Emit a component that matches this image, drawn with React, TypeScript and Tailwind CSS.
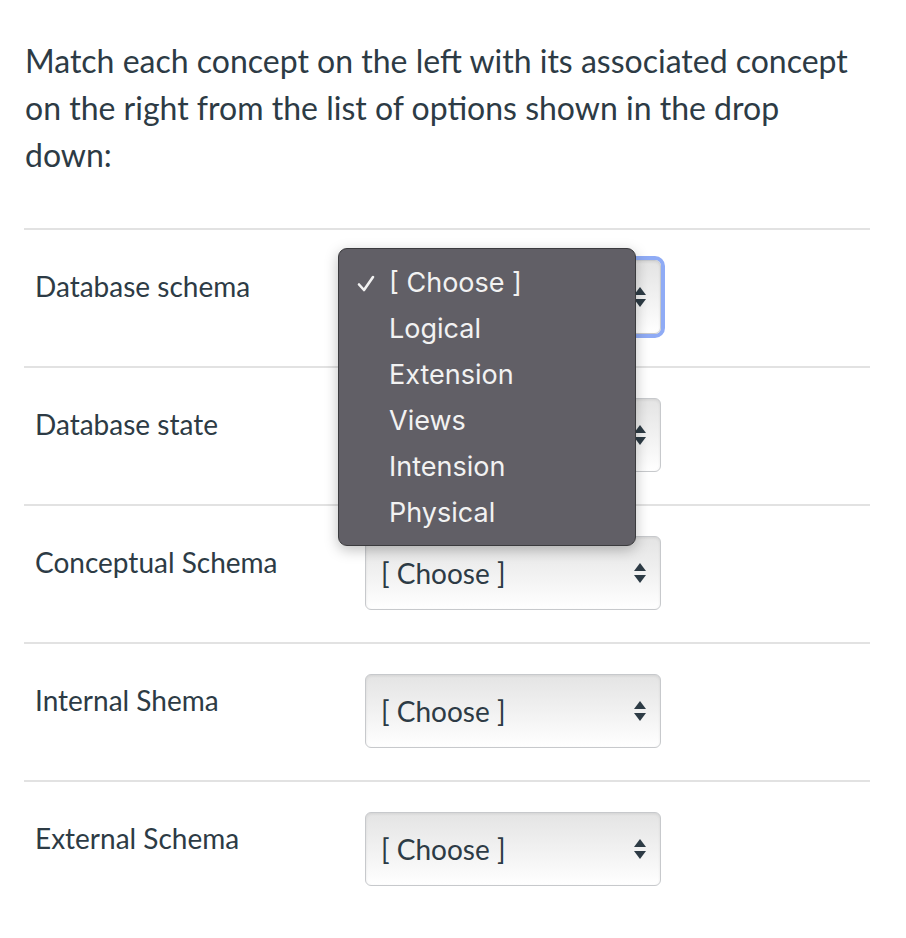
const rows = [
  "Database schema",
  "Database state",
  "Conceptual Schema",
  "Internal Shema",
  "External Schema",
];

const options = ["[ Choose ]", "Logical", "Extension", "Views", "Intension", "Physical"];

const Arrows = () => (
  <svg width="14" height="22" viewBox="0 0 14 22" className="shrink-0">
    <path d="M7 1 L13 9 L1 9 Z" fill="#2d3b45" />
    <path d="M1 13 L13 13 L7 21 Z" fill="#2d3b45" />
  </svg>
);

const Check = () => (
  <svg width="18" height="17" viewBox="0 0 18 17">
    <path d="M2 9.5 L7 15 L16 2" fill="none" stroke="#f2f2f2" strokeWidth="2.6" strokeLinecap="round" strokeLinejoin="round" />
  </svg>
);

const Select = ({ focused }: { focused?: boolean }) => (
  <div
    className={
      "mt-[30px] flex h-[74px] w-[296px] items-center justify-between rounded-[6px] border border-[#c7c9cc] bg-gradient-to-b from-[#e4e4e4] via-[#f1f1f1] to-white pl-[15px] pr-[13px] shadow-[inset_0_1px_3px_rgba(0,0,0,0.08)] " +
      (focused ? "ring-4 ring-[#8fabf5]" : "")
    }
  >
    <span className="text-[28px] text-[#2d3b45]">[ Choose ]</span>
    <Arrows />
  </div>
);

const Dropdown = () => (
  <div className="absolute left-[314px] top-[18px] z-10 h-[298px] w-[298px] rounded-[9px] border border-[#3b3b3e] bg-[#615f66] pt-[11px] shadow-[0_4px_14px_rgba(0,0,0,0.25)] font-['Inter',sans-serif]">
    {options.map((o, i) => (
      <div key={o} className="flex h-[46px] items-center text-[27px] text-[#f2f2f2]">
        <span className="flex w-[50px] justify-start pl-[18px]">{i === 0 ? <Check /> : null}</span>
        <span>{o}</span>
      </div>
    ))}
  </div>
);

export default function App() {
  return (
    <div className="min-h-screen bg-white pl-[24px] pt-[37px] font-['Lato',sans-serif] text-[#2d3b45]">
      <p className="w-[850px] pl-[1px] text-[32px] leading-[47px]">
        Match each concept on the left with its associated concept on the right from the list of
        options shown in the drop down:
      </p>
      <div className="mt-[50px] w-[846px]">
        {rows.map((label, i) => (
          <div key={label} className="relative flex h-[138px] border-t-2 border-[#e2e2e2]">
            <div className="w-[341px] pl-[11px] pt-[38px] text-[28px] leading-[36px]">{label}</div>
            <Select focused={i === 0} />
            {i === 0 && <Dropdown />}
          </div>
        ))}
      </div>
    </div>
  );
}
